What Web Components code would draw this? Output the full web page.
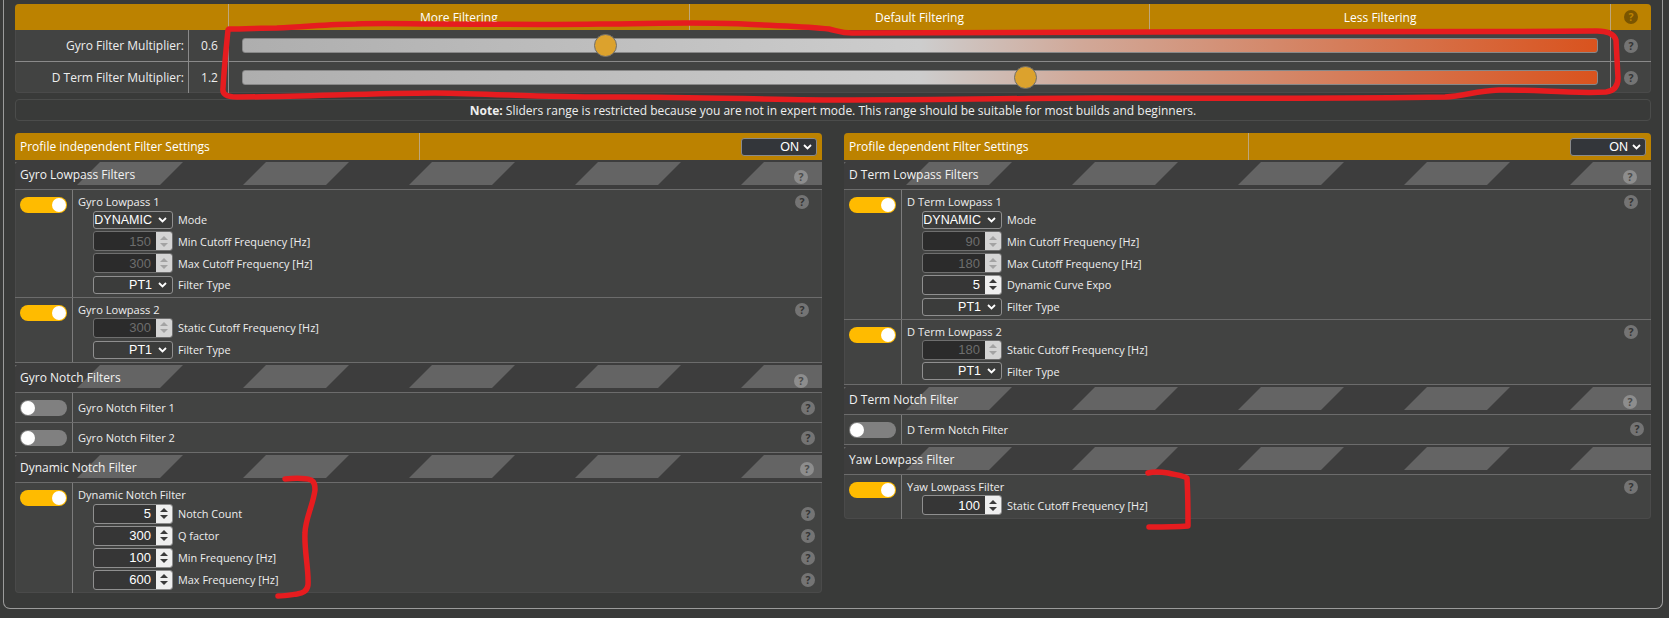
<!DOCTYPE html>
<html>
<head>
<meta charset="utf-8">
<title>Filter Settings</title>
<style>
html, body { margin: 0; height: 100%; overflow: hidden; background: #393a39; }
body { font: 12px "Open Sans", "Liberation Sans", sans-serif; color: #eee; }
</style>
</head>
<body>
<bf-tab>
  <bf-slider-table>
    <bf-slider-row label="Gyro Filter Multiplier:" value="0.6" pos="26.8"></bf-slider-row>
    <bf-slider-row label="D Term Filter Multiplier:" value="1.2" pos="57.8"></bf-slider-row>
  </bf-slider-table>
  <bf-note><b>Note:</b> Sliders range is restricted because you are not in expert mode. This range should be suitable for most builds and beginners.</bf-note>
  <bf-columns>
    <bf-panel title="Profile independent Filter Settings">
      <bf-subhead help="14" helpy="2">Gyro Lowpass Filters</bf-subhead>
      <bf-filter title="Gyro Lowpass 1" on help>
        <bf-field kind="select" value="DYNAMIC">Mode</bf-field>
        <bf-field value="150" disabled>Min Cutoff Frequency [Hz]</bf-field>
        <bf-field value="300" disabled>Max Cutoff Frequency [Hz]</bf-field>
        <bf-field kind="select" value="PT1">Filter Type</bf-field>
      </bf-filter>
      <bf-filter title="Gyro Lowpass 2" on help>
        <bf-field value="300" disabled>Static Cutoff Frequency [Hz]</bf-field>
        <bf-field kind="select" value="PT1">Filter Type</bf-field>
      </bf-filter>
      <bf-subhead help="14" helpy="3">Gyro Notch Filters</bf-subhead>
      <bf-filter title="Gyro Notch Filter 1" single help></bf-filter>
      <bf-filter title="Gyro Notch Filter 2" single help></bf-filter>
      <bf-subhead help="8" helpy="1">Dynamic Notch Filter</bf-subhead>
      <bf-filter title="Dynamic Notch Filter" on last>
        <bf-field value="5" help>Notch Count</bf-field>
        <bf-field value="300" help>Q factor</bf-field>
        <bf-field value="100" help>Min Frequency [Hz]</bf-field>
        <bf-field value="600" help>Max Frequency [Hz]</bf-field>
      </bf-filter>
    </bf-panel>
    <bf-panel title="Profile dependent Filter Settings">
      <bf-subhead help="14" helpy="2">D Term Lowpass Filters</bf-subhead>
      <bf-filter title="D Term Lowpass 1" on help>
        <bf-field kind="select" value="DYNAMIC">Mode</bf-field>
        <bf-field value="90" disabled>Min Cutoff Frequency [Hz]</bf-field>
        <bf-field value="180" disabled>Max Cutoff Frequency [Hz]</bf-field>
        <bf-field value="5">Dynamic Curve Expo</bf-field>
        <bf-field kind="select" value="PT1">Filter Type</bf-field>
      </bf-filter>
      <bf-filter title="D Term Lowpass 2" on help>
        <bf-field value="180" disabled>Static Cutoff Frequency [Hz]</bf-field>
        <bf-field kind="select" value="PT1">Filter Type</bf-field>
      </bf-filter>
      <bf-subhead help="14" helpy="2">D Term Notch Filter</bf-subhead>
      <bf-filter title="D Term Notch Filter" single help></bf-filter>
      <bf-subhead>Yaw Lowpass Filter</bf-subhead>
      <bf-filter title="Yaw Lowpass Filter" on help last>
        <bf-field value="100">Static Cutoff Frequency [Hz]</bf-field>
      </bf-filter>
    </bf-panel>
  </bf-columns>
</bf-tab>
<bf-marks></bf-marks>

<script>
class BfTab extends HTMLElement {
    constructor() {
        super();
        this.attachShadow({ mode: 'open' }).innerHTML = `
        <style>
        :host{ display:block; box-sizing:border-box; margin-left:3px; width:1660px; height:609px; padding:4px 11px 0; border:1px solid #9b9b9b; border-top:0; border-radius:0 0 7px 7px; }
        </style>
        <slot></slot>`;
    }
}

class BfHelp extends HTMLElement {
    constructor() {
        super();
        this.attachShadow({ mode: 'open' }).innerHTML = `
        <style>
        :host{ display:block; flex:none; width:14px; height:14px; }
        svg{ display:block; }
        circle{ fill:var(--help-bg,#747474); }
        text{ font:bold 10.5px "Open Sans",sans-serif; fill:var(--help-fg,#333); text-anchor:middle; }
        </style>
        <svg width="14" height="14" viewBox="0 0 14 14"><circle cx="7" cy="7" r="7"/><text x="7" y="10.8">?</text></svg>`;
    }
}

class BfSliderTable extends HTMLElement {
    constructor() {
        super();
        this.attachShadow({ mode: 'open' }).innerHTML = `
        <style>
        :host{ display:block; border-radius:4px; overflow:hidden; background:#424342; box-shadow:0 0 0 1px #4a4a4a inset; }
        .head{ display:grid; grid-template-columns:213px repeat(3,1fr) 41px; height:26px; background:#bc8200; }
        .head div{ display:flex; align-items:center; justify-content:center; border-left:1px solid #bda67c; color:#fff; }
        .head div:first-child{ border-left:0; }
        </style>
        <div class="head">
          <div></div>
          <div>More Filtering</div>
          <div>Default Filtering</div>
          <div>Less Filtering</div>
          <div><bf-help style="--help-bg:#7a5500;--help-fg:#bc8200"></bf-help></div>
        </div>
        <slot></slot>`;
    }
}

class BfSliderRow extends HTMLElement {
    constructor() {
        super();
        this.attachShadow({ mode: 'open' }).innerHTML = `
        <style>
        :host{ display:grid; grid-template-columns:173px 40px 1fr 41px; height:31px; }
        :host(:not(:first-child)){ height:32px; border-top:1px solid #8a8a8a; box-sizing:border-box; }
        .c{ display:flex; align-items:center; border-left:1px solid #8a8a8a; }
        .lab{ border-left:0; justify-content:flex-end; padding-right:4px; }
        .val{ justify-content:center; padding-left:2px; }
        .sl{ padding:0 12px 0 13px; }
        .track{ position:relative; flex:1; box-sizing:border-box; height:15px; border:1px solid #888; border-radius:3px; background:linear-gradient(to right,#aeaeae,#cdcdcd 50%,#d1a898 62%,#d9531e); }
        .thumb{ position:absolute; top:50%; width:23px; height:23px; margin:-11.5px 0 0 -11.5px; box-sizing:border-box; border:1px solid #6f6f6f; border-radius:50%; background:#dca22d; left:var(--pos); }
        .help{ justify-content:center; }
        </style>
        <div class="c lab">${this.getAttribute('label')}</div>
        <div class="c val">${this.getAttribute('value')}</div>
        <div class="c sl"><div class="track"><div class="thumb" style="--pos:${this.getAttribute('pos')}%"></div></div></div>
        <div class="c help"><bf-help></bf-help></div>`;
    }
}

class BfNote extends HTMLElement {
    constructor() {
        super();
        this.attachShadow({ mode: 'open' }).innerHTML = `
        <style>
        :host{ display:flex; align-items:center; justify-content:center; box-sizing:border-box; height:22px; margin-top:6px; border:1px solid #4b4c4b; border-radius:4px; color:#eee; }
        ::slotted(b){ font-weight:700; }
        </style>
        <span><slot></slot></span>`;
    }
}

class BfColumns extends HTMLElement {
    constructor() {
        super();
        this.attachShadow({ mode: 'open' }).innerHTML = `
        <style>
        :host{ display:flex; align-items:flex-start; gap:22px; margin-top:12px; }
        </style>
        <slot></slot>`;
    }
}

class BfPanel extends HTMLElement {
    constructor() {
        super();
        this.attachShadow({ mode: 'open' }).innerHTML = `
        <style>
        :host{ display:block; flex:1; min-width:0; border-radius:4px; overflow:hidden; background:#424342; box-shadow:0 0 0 1px #4a4a4a inset; }
        .head{ display:grid; grid-template-columns:1fr 1fr; height:27px; background:#bc8200; color:#fff; }
        .head div{ display:flex; align-items:center; padding-left:5px; }
        .head div + div{ justify-content:flex-end; padding:0 5px 0 0; border-left:1px solid #bda67c; }
        .on{ display:flex; align-items:center; justify-content:flex-end; box-sizing:border-box; width:76px; height:18px; padding-right:4px; border:1px solid #8a8a8a; border-radius:3px; background:#33363a; font:12.5px "Liberation Sans",sans-serif; }
        .on svg{ margin-left:4px; }
        </style>
        <div class="head">
          <div>${this.getAttribute('title')}</div>
          <div><span class="on">ON<svg width="9" height="6" viewBox="0 0 9 6"><path d="M1 1l3.5 3.5L8 1" fill="none" stroke="#fff" stroke-width="1.8"/></svg></span></div>
        </div>
        <slot></slot>`;
    }
}

class BfSubhead extends HTMLElement {
    constructor() {
        super();
        const right = this.getAttribute('help');
        this.attachShadow({ mode: 'open' }).innerHTML = `
        <style>
        :host{ display:flex; position:relative; align-items:center; height:30px; box-sizing:border-box; background:#3d3d3d; border-bottom:1px solid #6c6c6c; color:#f2f2f2; overflow:hidden; }
        svg{ position:absolute; left:0; top:2px; }
        span{ position:relative; padding-left:5px; }
        bf-help{ position:absolute; right:${right}px; top:${8 + +this.getAttribute('helpy')}px; --help-bg:#8d8d8d; --help-fg:#4b4b4b; }
        </style>
        <svg width="810" height="23">
          <defs><pattern id="st" width="166" height="23" patternUnits="userSpaceOnUse" patternTransform="translate(62 0)">
            <polygon points="0,23 23,0 106,0 83,23" fill="#646464"/>
          </pattern></defs>
          <rect width="810" height="23" fill="url(#st)"/>
        </svg>
        <span><slot></slot></span>
        ${right ? '<bf-help></bf-help>' : ''}`;
    }
}

class BfSwitch extends HTMLElement {
    constructor() {
        super();
        const on = this.hasAttribute('on');
        this.attachShadow({ mode: 'open' }).innerHTML = `
        <style>
        :host{ display:block; box-sizing:border-box; width:47px; height:16px; padding:1px; border-radius:8px; background:${on ? '#ffbb00' : '#808080'}; }
        div{ width:14px; height:14px; border-radius:50%; background:#fff; margin-left:${on ? '31px' : '0'}; }
        </style>
        <div></div>`;
    }
}

class BfFilter extends HTMLElement {
    constructor() {
        super();
        const single = this.hasAttribute('single');
        const last = this.hasAttribute('last');
        this.attachShadow({ mode: 'open' }).innerHTML = `
        <style>
        :host{ display:flex; box-sizing:border-box; font-size:11.1px; ${last ? '' : 'border-bottom:1px solid #6c6c6c;'} ${single ? 'height:30px;' : ''} }
        .sw{ flex:none; box-sizing:border-box; width:58px; padding:7px 0 0 5px; border-right:1px solid #7c7c7c; }
        .body{ flex:1; min-width:0; padding:0 0 ${last ? '4px' : '3px'} 5px; }
        .title{ display:flex; align-items:center; justify-content:space-between; height:${single ? '29px' : last ? '21px' : '20px'}; padding-top:${single ? '0' : '2px'}; box-sizing:border-box; }
        bf-help{ margin-right:${single ? '7px' : '13px'}; margin-top:${single ? '0' : '1px'}; }
        .fields{ display:flex; flex-direction:column; gap:${last ? '3px' : '2.75px'}; padding-left:15px; }
        </style>
        <div class="sw"><bf-switch ${this.hasAttribute('on') ? 'on' : ''}></bf-switch></div>
        <div class="body">
          <div class="title"><span>${this.getAttribute('title')}</span>${this.hasAttribute('help') ? '<bf-help></bf-help>' : ''}</div>
          <div class="fields"><slot></slot></div>
        </div>`;
    }
}

class BfField extends HTMLElement {
    constructor() {
        super();
        const select = this.getAttribute('kind') === 'select';
        const off = this.hasAttribute('disabled');
        const value = this.getAttribute('value');
        const box = select
            ? `<div class="box sel"><span>${value}</span><svg width="9" height="6" viewBox="0 0 9 6"><path d="M1 1l3.5 3.5L8 1" fill="none" stroke="#fff" stroke-width="1.8"/></svg></div>`
            : `<div class="box num"><span class="v">${value}</span><div class="spin"><svg width="8" height="15" viewBox="0 0 8 15"><path d="M4 2L8 6H0zM4 13L0 9h8z"/></svg></div></div>`;
        this.attachShadow({ mode: 'open' }).innerHTML = `
        <style>
        :host{ display:flex; align-items:center; height:19px; padding-right:7px; }
        .box{ display:flex; align-items:center; justify-content:flex-end; flex:none; box-sizing:border-box; width:80px; border:1px solid #8f8f8f; border-radius:3px; font-family:"Liberation Sans",sans-serif; color:#fff; }
        .sel{ height:18px; padding-right:5px; background:#3b3c3b; font-size:12.5px; }
        .sel svg{ margin-left:6px; }
        .num{ height:20px; background:${off ? '#2b2b2b' : '#363636'}; font-size:13px; overflow:hidden; ${off ? 'border-color:#6f6f6f;' : ''} }
        .v{ padding-right:5px; color:${off ? '#6d6d6d' : '#fff'}; }
        .spin{ display:flex; align-items:center; justify-content:center; width:16px; height:100%; background:${off ? '#d4d4d4' : '#efefef'}; }
        .spin svg{ fill:${off ? '#a3a3a3' : '#3b3b3b'}; }
        .label{ margin-left:5px; flex:1; font-size:10.9px; }
        </style>
        ${box}<span class="label"><slot></slot></span>${this.hasAttribute('help') ? '<bf-help></bf-help>' : ''}`;
    }
}

// the red pen strokes someone drew on top of the screenshot
class BfMarks extends HTMLElement {
    constructor() {
        super();
        this.attachShadow({ mode: 'open' }).innerHTML = `
        <style>
        :host{ position:absolute; left:0; top:0; pointer-events:none; }
        svg{ display:block; }
        path{ fill:none; stroke:#e61c1f; stroke-width:5.5; stroke-linecap:round; stroke-linejoin:round; }
        </style>
        <svg width="1669" height="618" viewBox="0 0 1669 618">
          <path d="M229 29C245 29 262 28 277 28C305 27 330 24 356 24C385 23 410 24 435 24C480 24 540 25 600 24C630 24 660 23 689 23C710 23 727 23 743 24C775 26 805 26 829 29C838 31 842 33 852 33C950 33 1050 33 1160 32C1300 32 1450 32 1597 31C1608 31 1614 34 1616 40L1618 78C1618 86 1614 91 1606 92C1570 94 1530 89 1499 90C1475 91 1465 96 1445 97C1330 99 1220 98 1100 98C1030 98 950 100 850 100C780 100 700 97 620 97C560 98 500 94 435 93C370 93 300 97 237 97C226 97 222 94 223 88C224 70 226 50 228 30"/>
          <path d="M285 479C295 478 305 478 311 480C315 482 315 486 315 490C313 505 305 520 305 533C304 550 309 570 308 585C307 592 302 593 297 594C290 595 284 596 278 596"/>
          <path d="M1148 473C1155 471 1162 472 1168 473C1175 475 1182 475 1187 478C1188 495 1188 512 1188 526C1175 527 1160 527 1149 527"/>
        </svg>`;
    }
}

customElements.define('bf-help', BfHelp);
customElements.define('bf-switch', BfSwitch);
customElements.define('bf-field', BfField);
customElements.define('bf-filter', BfFilter);
customElements.define('bf-subhead', BfSubhead);
customElements.define('bf-panel', BfPanel);
customElements.define('bf-columns', BfColumns);
customElements.define('bf-note', BfNote);
customElements.define('bf-slider-row', BfSliderRow);
customElements.define('bf-slider-table', BfSliderTable);
customElements.define('bf-marks', BfMarks);
customElements.define('bf-tab', BfTab);
</script>
</body>
</html>
